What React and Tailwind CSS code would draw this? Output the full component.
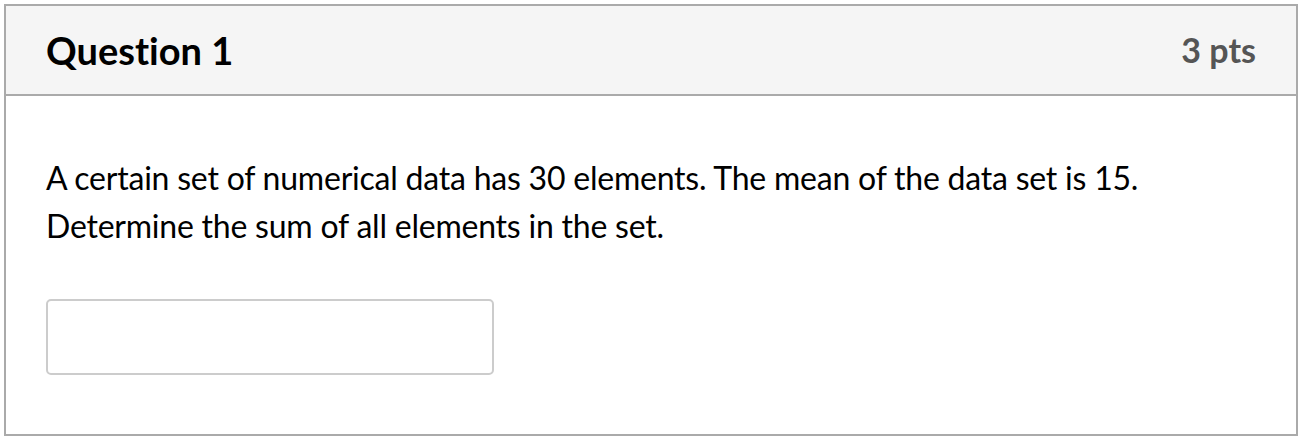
export default function App() {
  return (
    <div className="w-[1300px] h-[440px] bg-white pt-1 pl-1 [font-variant-ligatures:none]" style={{ fontFamily: "Lato, 'Noto Sans', sans-serif" }}>
      <div className="w-[1294px] h-[432px] border-2 border-[#aaaaaa] flex flex-col">
        <div className="h-[90px] bg-[#f5f5f5] border-b-2 border-[#aaaaaa] flex items-center justify-between px-[40px]">
          <h2 className="text-[38px] font-bold text-black leading-none">Question 1</h2>
          <span className="text-[34px] font-bold text-[#555555] leading-none">3 pts</span>
        </div>
        <div className="flex-1 px-[40px] pt-[58px]">
          <p className="text-[32px] leading-[48px] tracking-[-0.22px] text-black">
            A certain set of numerical data has 30 elements. The mean of the data set is 15.
            <br />
            Determine the sum of all elements in the set.
          </p>
          <input
            type="text"
            className="mt-[49px] block w-[448px] h-[76px] border-2 border-[#cccccc] rounded-[5px] bg-white outline-none"
          />
        </div>
      </div>
    </div>
  );
}
